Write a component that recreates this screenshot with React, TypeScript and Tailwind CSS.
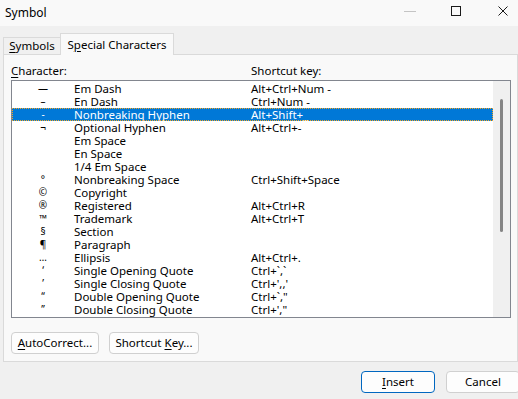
import React from "react";

const rows: [string, string, string][] = [
  ["—", "Em Dash", "Alt+Ctrl+Num -"],
  ["–", "En Dash", "Ctrl+Num -"],
  ["-", "Nonbreaking Hyphen", "Alt+Shift+_"],
  ["¬", "Optional Hyphen", "Alt+Ctrl+-"],
  ["", "Em Space", ""],
  ["", "En Space", ""],
  ["", "1/4 Em Space", ""],
  ["°", "Nonbreaking Space", "Ctrl+Shift+Space"],
  ["©", "Copyright", ""],
  ["®", "Registered", "Alt+Ctrl+R"],
  ["™", "Trademark", "Alt+Ctrl+T"],
  ["§", "Section", ""],
  ["¶", "Paragraph", ""],
  ["…", "Ellipsis", "Alt+Ctrl+."],
  ["‘", "Single Opening Quote", "Ctrl+`,`"],
  ["’", "Single Closing Quote", "Ctrl+',,'"],
  ["“", "Double Opening Quote", "Ctrl+`,\""],
  ["”", "Double Closing Quote", "Ctrl+',\""],
];

export default function App() {
  return (
    <div
      className="w-[518px] h-[399px] bg-[#f0f0f0] overflow-hidden text-[11.5px] text-[#000] flex flex-col"
      style={{ fontFamily: '"Noto Sans", "Open Sans", sans-serif' }}
    >
      {/* Title bar */}
      <div className="h-[26px] bg-[#f9f9f9] flex items-center pl-[5px] relative shrink-0">
        <span className="leading-none text-[12px]">Symbol</span>
        <div className="absolute right-0 top-0 h-[22px] flex items-center">
          <div className="w-[12px] h-px bg-[#c4c4c4] mr-[35px]" />
          <div className="w-[10px] h-[10px] border border-[#1a1a1a] mr-[37px]" />
          <svg width="10" height="10" viewBox="0 0 10 10" className="mr-[10px]">
            <path d="M0.5 0.5 L9.5 9.5 M9.5 0.5 L0.5 9.5" stroke="#1a1a1a" strokeWidth="1" />
          </svg>
        </div>
      </div>

      {/* Tabs */}
      <div className="h-[28px] flex items-end pl-[3px] shrink-0">
        <div className="w-[58px] h-[17px] border border-b-0 border-[#dadada] bg-[#f0f0f0] flex items-center justify-center leading-none">
          <span>
            <span className="underline underline-offset-2">S</span>ymbols
          </span>
        </div>
        <div className="w-[114px] h-[22px] border border-b-0 border-[#dadada] bg-[#f9f9f9] flex items-center justify-center leading-none relative z-10 -mb-px -ml-px">
          <span>
            S<span className="underline underline-offset-2">p</span>ecial Characters
          </span>
        </div>
      </div>

      {/* Panel */}
      <div className="ml-[3px] w-[515px] h-[308px] border border-[#dadada] bg-[#f9f9f9] shrink-0 flex flex-col pl-[7px] pt-[8px]">
        <div className="h-[16px] flex items-center leading-none">
          <span className="w-[240px]">
            <span className="underline underline-offset-2">C</span>haracter:
          </span>
          <span>Shortcut key:</span>
        </div>
        <div className="mt-[1px] w-[500px] h-[238px] border border-[#82868f] bg-white flex">
          <div className="w-[481px] pt-px">
            {rows.map(([c, n, k], i) => {
              const sel = i === 2;
              return (
                <div
                  key={i}
                  className={
                    "h-[13px] flex items-center leading-[13px] whitespace-nowrap " +
                    (sel ? "bg-[#0078d7] text-white outline outline-1 outline-dotted outline-[#f5a623] -outline-offset-1" : "")
                  }
                >
                  <span className="w-[62px] text-center text-[10px] leading-[13px]">{c}</span>
                  <span className="w-[177px]">{n}</span>
                  <span>{k}</span>
                </div>
              );
            })}
          </div>
          <div className="w-[17px] bg-[#f0f0f0] relative">
            <div className="absolute left-[7px] top-[18px] w-[3px] h-[133px] bg-[#858585] rounded-full" />
          </div>
        </div>
        <div className="mt-[14px] flex gap-[10px]">
          <button className="w-[88px] h-[22px] rounded-[4px] border border-[#d0d0d0] bg-[#fdfdfd] flex items-center justify-center leading-none">
            <span>
              <span className="underline underline-offset-2">A</span>utoCorrect...
            </span>
          </button>
          <button className="w-[90px] h-[22px] rounded-[4px] border border-[#d0d0d0] bg-[#fdfdfd] flex items-center justify-center leading-none">
            <span>
              Shortcut <span className="underline underline-offset-2">K</span>ey...
            </span>
          </button>
        </div>
      </div>

      {/* Bottom buttons */}
      <div className="mt-[9px] pl-[361px] flex gap-[11px]">
        <button className="w-[74px] h-[22px] rounded-[4px] border border-[#0067c0] bg-[#fdfdfd] flex items-center justify-center leading-none shrink-0">
          <span>
            <span className="underline underline-offset-2">I</span>nsert
          </span>
        </button>
        <button className="w-[74px] h-[22px] rounded-[4px] border border-[#d0d0d0] bg-[#fdfdfd] flex items-center justify-center leading-none shrink-0">
          Cancel
        </button>
      </div>
    </div>
  );
}
